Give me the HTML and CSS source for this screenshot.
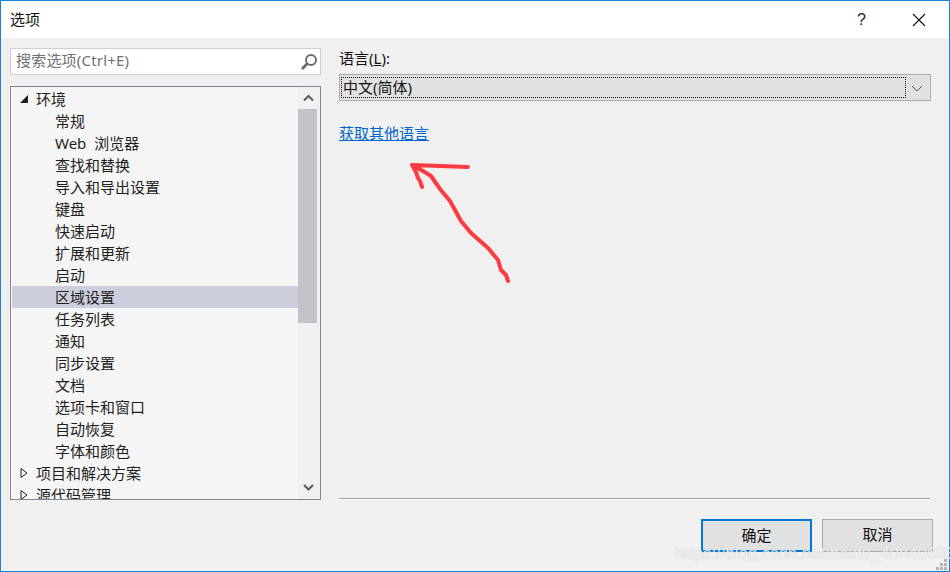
FILE: index.html
```html
<!DOCTYPE html>
<html lang="zh-CN">
<head>
<meta charset="utf-8">
<title>选项</title>
<link rel="stylesheet" href="styles.css">
</head>
<body>
<div class="window">
  <header class="titlebar">
    <span class="title">选项</span>
    <span class="help">?</span>
    <svg class="close" width="14" height="14" viewBox="0 0 14 14"><path d="M1 1L13 13M13 1L1 13" stroke="#111" stroke-width="1.1" fill="none"/></svg>
  </header>
  <div class="content">
    <aside class="left">
      <div class="search">
        <span class="search-text">搜索选项(Ctrl+E)</span>
        <svg class="search-icon" width="18" height="18" viewBox="0 0 18 18"><circle cx="11" cy="7" r="5" fill="none" stroke="#6e6e6e" stroke-width="2"/><path d="M7.200 10.800L2 16" stroke="#6e6e6e" stroke-width="3" fill="none"/></svg>
      </div>
      <div class="tree">
        <div class="rows">
          <div class="row top"><svg class="tw" width="10" height="10" viewBox="0 0 10 10"><path d="M9 1V9H1Z" fill="#1e1e1e"/></svg>环境</div>
          <div class="row sub">常规</div>
          <div class="row sub wide">Web 浏览器</div>
          <div class="row sub">查找和替换</div>
          <div class="row sub">导入和导出设置</div>
          <div class="row sub">键盘</div>
          <div class="row sub">快速启动</div>
          <div class="row sub">扩展和更新</div>
          <div class="row sub">启动</div>
          <div class="row sub selected">区域设置</div>
          <div class="row sub">任务列表</div>
          <div class="row sub">通知</div>
          <div class="row sub">同步设置</div>
          <div class="row sub">文档</div>
          <div class="row sub">选项卡和窗口</div>
          <div class="row sub">自动恢复</div>
          <div class="row sub">字体和颜色</div>
          <div class="row top"><svg class="tw" width="10" height="12" viewBox="0 0 10 12"><path d="M2 1.500L8 6L2 10.500Z" fill="none" stroke="#1e1e1e"/></svg>项目和解决方案</div>
          <div class="row top"><svg class="tw" width="10" height="12" viewBox="0 0 10 12"><path d="M2 1.500L8 6L2 10.500Z" fill="none" stroke="#1e1e1e"/></svg>源代码管理</div>
        </div>
        <div class="scrollbar">
          <svg class="arrow" width="22" height="22" viewBox="0 0 22 22"><path d="M6 13.500L10.500 9L15 13.500" fill="none" stroke="#5c5c5c" stroke-width="2"/></svg>
          <div class="thumb"></div>
          <svg class="arrow down" width="22" height="20" viewBox="0 0 22 20"><path d="M6 8L10.500 12.500L15 8" fill="none" stroke="#5c5c5c" stroke-width="2"/></svg>
        </div>
      </div>
    </aside>
    <main class="right">
      <label class="lang-label">语言(<u>L</u>):</label>
      <div class="combo">
        <div class="combo-value">中文(简体)</div>
        <svg class="chev" width="20" height="20" viewBox="0 0 20 20"><path d="M5 8L10 13L15 8" fill="none" stroke="#555" stroke-width="1"/></svg>
      </div>
      <a class="link" href="#">获取其他语言</a>
      <div class="spacer"></div>
      <div class="rule"></div>
      <div class="buttons">
        <button class="btn primary">确定</button>
        <button class="btn">取消</button>
      </div>
    </main>
  </div>
  <svg class="annot" width="950" height="572" viewBox="0 0 950 572"><path d="M412 165L468 167M412 165L416 172L418 178L420 181L422 187M412 165L423 171L431 176L440 189L450 201L461 221L471 233L488 248L498 260L501 270L506 275L508 281" fill="none" stroke="#fb3b40" stroke-width="4" stroke-linecap="round" stroke-linejoin="round"/></svg>
  <span class="watermark">https://blog.csdn.net/baidu_40840693</span>
  <svg class="grip" width="12" height="12" viewBox="0 0 12 12"><path d="M8 0h3v3H8zM4 4h3v3H4zM8 4h3v3H8zM0 8h3v3H0zM4 8h3v3H4zM8 8h3v3H8z" fill="#b5b5b5"/></svg>
</div>
</body>
</html>
```
FILE: styles.css
```css
* { box-sizing: border-box; }
html, body { margin: 0; padding: 0; }
body {
  width: 950px;
  height: 572px;
  overflow: hidden;
  font-family: "Noto Sans", "Noto Sans CJK SC", sans-serif;
  font-size: 15px;
  color: #1e1e1e;
}
.window {
  position: relative;
  width: 950px;
  height: 572px;
  border: 1px solid #1883d7;
  background: #f0f0f0;
  display: flex;
  flex-direction: column;
}
.titlebar {
  height: 37px;
  background: #fff;
  display: flex;
  align-items: center;
  padding: 0 23px 0 9px;
  flex: none;
}
.title { flex: 1; color: #111; line-height: 37px; }
.help { width: 14px; margin-right: 41px; font-family: "Liberation Sans", sans-serif; font-size: 16px; color: #222; }
.content {
  flex: 1;
  display: flex;
  min-height: 0;
  padding: 10px 17px 19px 9px;
}
.left {
  width: 311px;
  flex: none;
  display: flex;
  flex-direction: column;
  gap: 11px;
  height: 452px;
}
.search {
  height: 27px;
  border: 1px solid #cccedb;
  background: #fff;
  display: flex;
  align-items: center;
  justify-content: space-between;
  padding: 0 1px 0 5px;
  flex: none;
}
.search-text { color: #717171; line-height: 23px; height: 25px; letter-spacing: 0.2px; }
.search-icon { margin-right: 1px; }
.tree {
  height: 414px;
  border: 1px solid #828790;
  background: #f5f5f5;
  display: flex;
  flex: none;
  overflow: hidden;
}
.rows { width: 287px; flex: none; padding: 1px 0 0 1px; overflow: hidden; }
.row {
  height: 22px;
  line-height: 22px;
  white-space: nowrap;
  color: #1e1e1e;
  display: flex;
  align-items: center;
}
.top { padding-left: 7px; }
.tw { width: 10px; margin-right: 7px; flex: none; }
.sub { padding-left: 43px; }
.wide { word-spacing: 4px; }
.selected { background: #cccedb; }
.scrollbar {
  flex: 1;
  background: #f0f0f0;
  display: flex;
  flex-direction: column;
}
.arrow { flex: none; display: block; }
.thumb { width: 19px; height: 214px; background: #c2c3c9; flex: none; }
.arrow.down { margin-top: auto; margin-bottom: 2px; }
.right {
  flex: 1;
  margin-left: 18px;
  display: flex;
  flex-direction: column;
  min-width: 0;
}
.lang-label { line-height: 20px; height: 22px; color: #111; display: block; }
.combo {
  margin-top: 4px;
  width: 592px;
  height: 27px;
  border: 1px solid #acacac;
  background: #e1e1e1;
  display: flex;
  align-items: center;
  padding: 2px 2px 2px 1px;
  flex: none;
}
.combo-value {
  flex: 1;
  height: 21px;
  line-height: 18px;
  border: 1px dotted #111;
  padding-left: 1px;
  color: #111;
}
.chev { margin: 0 1px 0 1px; flex: none; }
.link {
  margin-top: 21px;
  line-height: 22px;
  color: #0066cc;
  align-self: flex-start;
  text-decoration: underline;
}
.spacer { flex: 1; }
.rule {
  width: 591px;
  height: 2px;
  border-top: 1px solid #a0a0a0;
  border-bottom: 1px solid #fff;
  flex: none;
  position: relative;
  top: 1px;
}
.buttons {
  margin-top: 20px;
  display: flex;
  justify-content: flex-end;
  gap: 10px;
  width: 594px;
  flex: none;
}
.btn {
  width: 111px;
  height: 33px;
  border: 1px solid #acacac;
  background: #e1e1e1;
  font: inherit;
  line-height: 29px;
  color: #111;
  padding: 0 0 2px;
}
.btn.primary { border: 2px solid #0078d7; }
.annot { position: absolute; left: -1px; top: -1px; pointer-events: none; }
.watermark {
  position: absolute;
  left: 674px;
  top: 543px;
  font-family: "Liberation Sans", sans-serif;
  font-size: 16.800px;
  line-height: 20px;
  color: rgba(255, 255, 255, 0.8);
  text-shadow: 0 0 1px rgba(130, 130, 130, 0.5);
  white-space: nowrap;
}
.grip { position: absolute; right: 1px; bottom: 0; }
```
